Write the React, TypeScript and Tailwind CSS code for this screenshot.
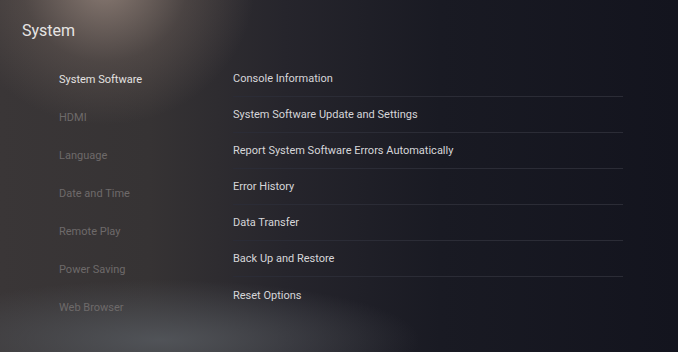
const categories = [
  'System Software',
  'HDMI',
  'Language',
  'Date and Time',
  'Remote Play',
  'Power Saving',
  'Web Browser',
];

const options = [
  'Console Information',
  'System Software Update and Settings',
  'Report System Software Errors Automatically',
  'Error History',
  'Data Transfer',
  'Back Up and Restore',
  'Reset Options',
];

export default function App() {
  return (
    <div
      className="relative h-[352px] w-[678px] overflow-hidden bg-[radial-gradient(ellipse_150px_140px_at_105px_-15px,rgba(150,133,124,0.85),rgba(120,105,98,0.35)_55%,transparent_100%),radial-gradient(ellipse_260px_60px_at_160px_340px,rgba(82,85,90,0.95),transparent_100%),linear-gradient(90deg,#3a3637_0%,#363334_22%,#26252c_42%,#191a23_65%,#13141e_100%)] text-[11px] text-[#d6d6d9]"
      style={{ fontFamily: 'Roboto, "Open Sans", sans-serif' }}
    >
      <h1 className="pl-[22px] pt-[20px] text-[16px] leading-[22px] font-normal text-[#e6e4e3]">System</h1>

      <div className="mt-[19px] flex">
        <ul className="w-[233px] pl-[59px]">
          {categories.map((c, i) => (
            <li
              key={c}
              className={`flex h-[38px] items-center ${i === 0 ? 'text-[#e4e2e1]' : 'text-[#6e6a6a]'}`}
            >
              {c}
            </li>
          ))}
        </ul>

        <ul className="w-[390px]">
          {options.map((o, i) => (
            <li
              key={o}
              className={`flex h-[36px] items-center pt-[2px] ${i < options.length - 1 ? 'border-b border-[#2b2c36]' : ''}`}
            >
              {o}
            </li>
          ))}
        </ul>
      </div>
    </div>
  );
}
